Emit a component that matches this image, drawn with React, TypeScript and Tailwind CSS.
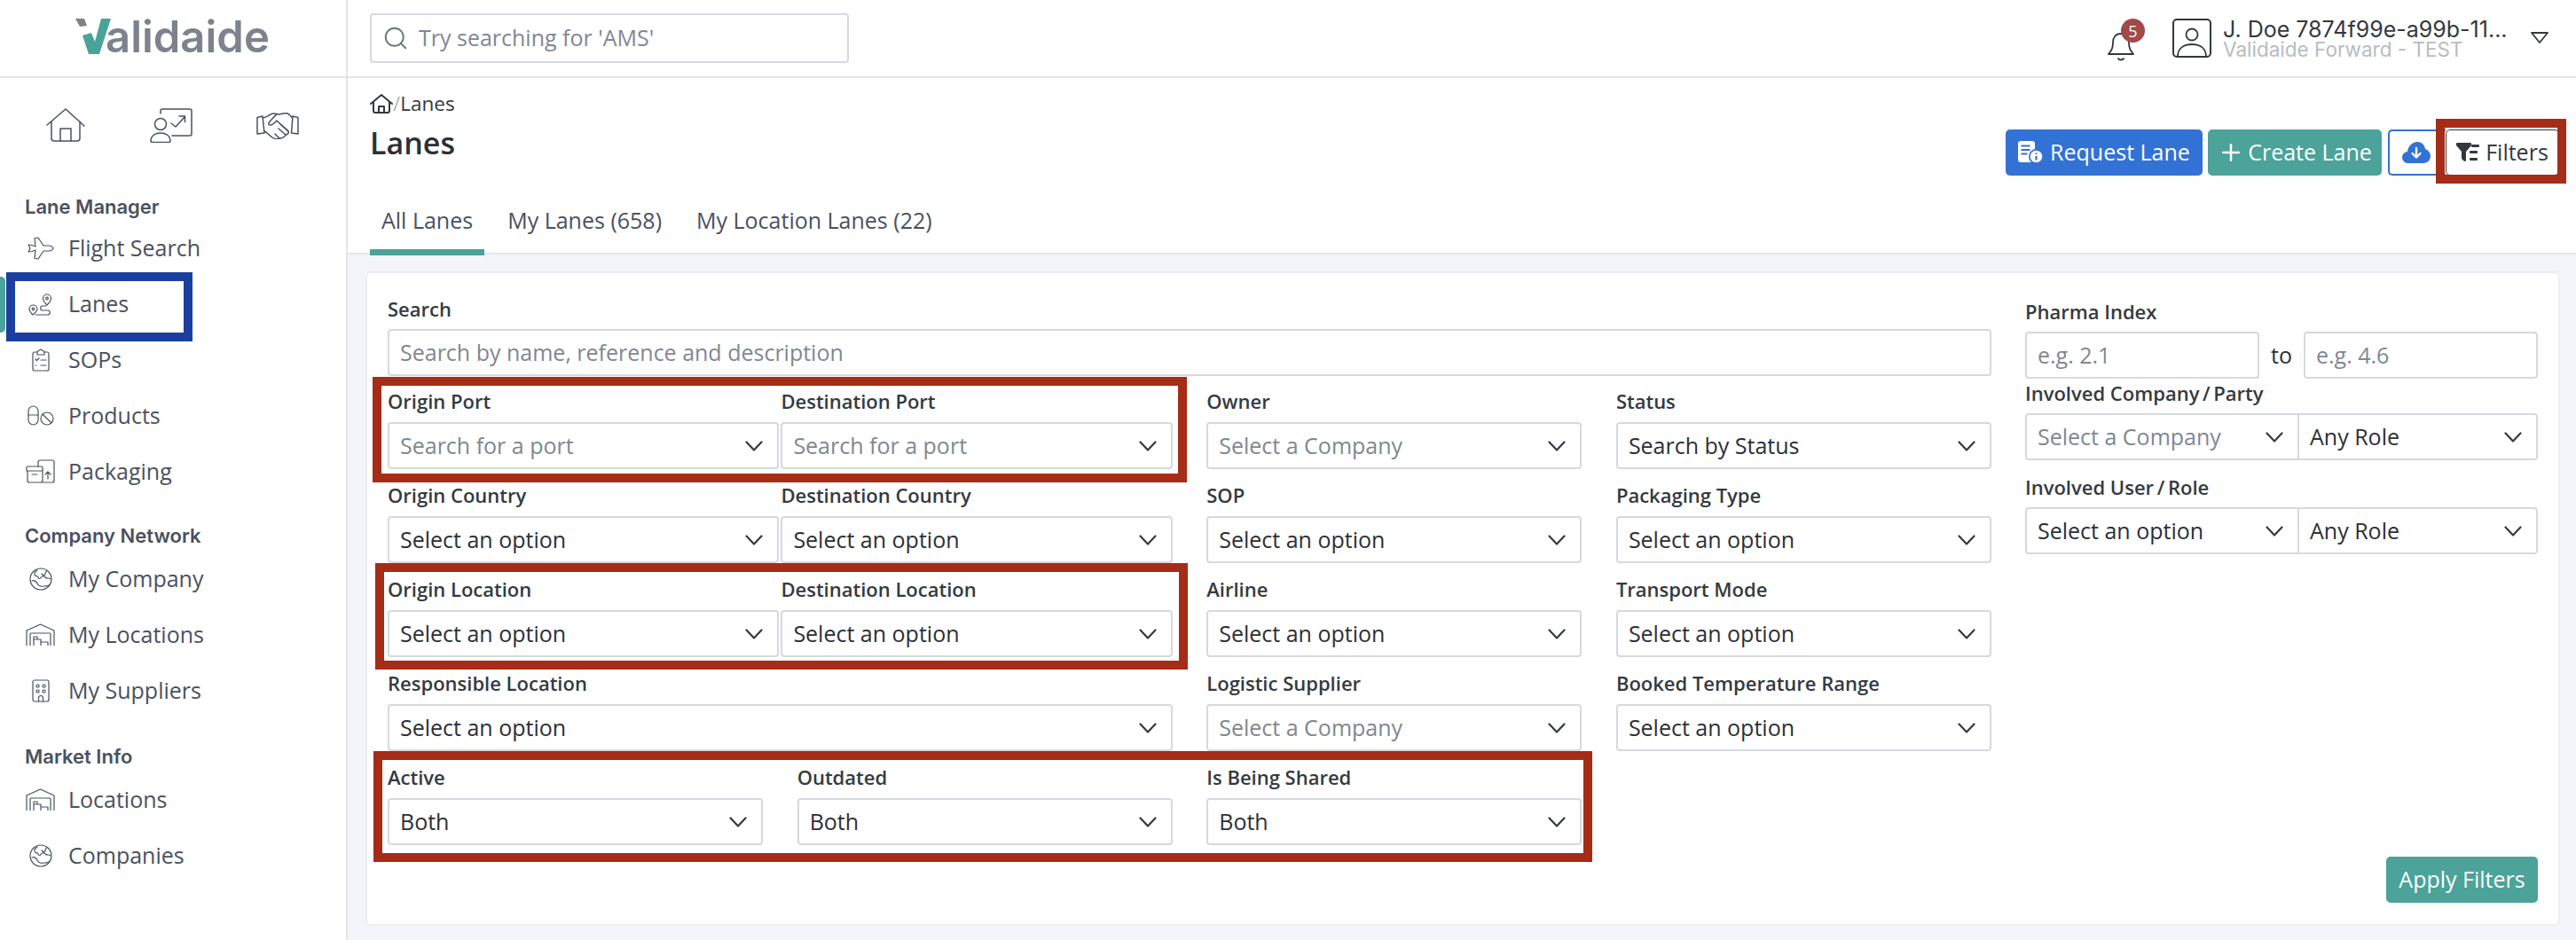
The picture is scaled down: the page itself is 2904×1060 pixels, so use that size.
import { ReactNode } from "react"
import { Search as SearchIcon, Plus } from "lucide-react"

const ink = "#4a5160"

function Ico({ w, h, vb, children, stroke = ink, sw = 1.5 }: { w: number; h: number; vb: string; children: ReactNode; stroke?: string; sw?: number }) {
  return (
    <svg width={w} height={h} viewBox={vb} fill="none" stroke={stroke} strokeWidth={sw} strokeLinecap="round" strokeLinejoin="round">
      {children}
    </svg>
  )
}

const HomeIcon = () => (
  <Ico w={44} h={38} vb="0 0 44 38">
    <path d="M1 19 22 1l21 19M6 15v19a3 3 0 0 0 3 3h26a3 3 0 0 0 3-3V15" />
    <path d="M16 37V23h12v14" />
  </Ico>
)
const PresenterIcon = () => (
  <Ico w={48} h={39} vb="0 0 48 39">
    <path d="M12 6V3a2 2 0 0 1 2-2h31a2 2 0 0 1 2 2v26a2 2 0 0 1-2 2H25" />
    <circle cx="12" cy="18" r="6.5" />
    <path d="M1 37c0-6 5-9 11-9s11 3 11 9c0 1-1 1.5-2 1.5H3C2 38.5 1 38 1 37Z" />
    <path d="m24 17 5 4 10-11M33 9h6.5v6.5" />
  </Ico>
)
const HandshakeIcon = () => (
  <Ico w={48} h={31} vb="0 0 48 31">
    <path d="M1 6.5 7 5l2 19-8 1ZM47 6.500 41 5l-1.500 19 7.500 1Z" />
    <path d="M7.500 7c5-1 8-5 12-5 3 0 4 1 6 1 4-1 8-2 10-1 2 1 4 4 5 5M9 22c3 1 6 5 9 7 3 2 6 2 8 1 3 0 6-2 7-4 2 0 4-2 3-4-1-1-10-9-13-12-1 1-5 6-8 5-3-1 0-4 2-6 2-2 4-5 6-6" />
    <path d="M33 26 25 19M36 22l-8-7M26 30l-5-5" />
  </Ico>
)
const PlaneIcon = () => (
  <Ico w={30} h={26} vb="0 0 30 26" sw={1.2}>
    <path d="M1 9l4 .5 4 1.5L8 1.5 12 1l6 9h6c3 0 5 2 5 3s-2 3-5 3h-6l-6 9-4-.5 1-9.5-4 1.5-4 .5 2-4Z" />
  </Ico>
)
const RouteIcon = () => (
  <Ico w={27} h={26} vb="0 0 27 26" sw={1.2}>
    <path d="M21 14c-3-3-4.500-5-4.500-7.500a4.500 4.500 0 0 1 9 0C25.500 9 24 11 21 14Z" />
    <circle cx="21" cy="6.5" r="1.3" />
    <path d="M5 25c-2.500-2.500-4-4.500-4-6.500a4.500 4.500 0 0 1 9 0C10 20.500 8 22.500 5 25Z" />
    <circle cx="5.5" cy="18.5" r="1.3" />
    <path d="M20 15h-4c-3 0-3 5 0 5h6c3 0 3 4.500 0 5H8" />
  </Ico>
)
const ClipboardIcon = () => (
  <Ico w={20} h={26} vb="0 0 20 26" sw={1.2}>
    <path d="M6 4H3a2 2 0 0 0-2 2v17a2 2 0 0 0 2 2h14a2 2 0 0 0 2-2V6a2 2 0 0 0-2-2h-3" />
    <path d="M6 7V3.5L10 1l4 2.5V7Z" />
    <path d="m4 12 1.5 1.500L8 11M10 13h6M4 19h1M10 19h6" />
  </Ico>
)
const PillIcon = () => (
  <Ico w={30} h={23} vb="0 0 30 23" sw={1.2}>
    <rect x="1" y="1" width="11" height="21" rx="5.5" />
    <path d="M1 11h11" />
    <circle cx="22" cy="15" r="7" />
    <path d="m17 10 10 10" />
  </Ico>
)
const BoxIcon = () => (
  <Ico w={33} h={27} vb="0 0 33 27" sw={1.2}>
    <path d="M14 8V3a2 2 0 0 1 2-2h14a2 2 0 0 1 2 2v21a2 2 0 0 1-2 2H19" />
    <path d="M1 9a1 1 0 0 1 1-1h16a1 1 0 0 1 1 1v4H1ZM2 13v11a2 2 0 0 0 2 2h13a2 2 0 0 0 2-2V13" />
    <path d="M7 17h6M25 22v-8M22 17l3-3 3 3" />
  </Ico>
)
const GlobeIcon = () => (
  <Ico w={26} h={26} vb="0 0 26 26" sw={1.2}>
    <circle cx="13" cy="13" r="12" />
    <path d="M9 3c-2 2-4 2-3 5s4 1 4 3 3 2 3 0c2 0 4-3 5-3-1-3 2-2 1-4M14 7l4 4c2 2 5 0 6 2" />
    <path d="M3 15c3-1 5 1 6 3s4 4 8 3c3 0 5 0 6-2" />
  </Ico>
)
const WarehouseIcon = () => (
  <Ico w={33} h={25} vb="0 0 33 25" sw={1.2}>
    <path d="M1 25V8L16.5 1 32 8v17" />
    <path d="M5 25V12a1 1 0 0 1 1-1h21a1 1 0 0 1 1 1v13" />
    <path d="M9 25V18h8v7M17 21h8v4M13 18v-3h-4v3" />
  </Ico>
)
const BuildingIcon = () => (
  <Ico w={20} h={26} vb="0 0 20 26" sw={1.2}>
    <rect x="1" y="1" width="18" height="24" rx="2" />
    <rect x="5" y="6" width="3" height="3" rx="1" />
    <rect x="12" y="6" width="3" height="3" rx="1" />
    <rect x="5" y="12" width="3" height="3" rx="1" />
    <rect x="12" y="12" width="3" height="3" rx="1" />
    <path d="M7.5 25v-4a2.500 2.500 0 0 1 5 0v4" />
  </Ico>
)

function NavItem({ icon, label }: { icon: ReactNode; label: string }) {
  return (
    <div className="flex h-[63px] items-center text-[25px] text-[#4a5160]">
      <div className="mr-[14px] flex w-[35px] items-center justify-center">{icon}</div>
      <span>{label}</span>
    </div>
  )
}

function NavHeading({ children, className }: { children: ReactNode; className?: string }) {
  return <div className={`font-['Inter',sans-serif] text-[22px] leading-[30px] font-semibold text-[#4a5160] ${className ?? ""}`}>{children}</div>
}

function Sidebar() {
  return (
    <aside className="w-[392px] shrink-0 border-r-2 border-[#e4e5e9] bg-white">
      <div className="flex h-[88px] items-start border-b-2 border-[#e4e5e9] pl-[85px] pt-[20px]">
        <svg width="40" height="42" viewBox="0 0 40 42" className="shrink-0">
          <path d="M0 1h10l3 8-8 1Z" fill="#7c838c" />
          <path d="M8 20l10-3 4 10L29 1h11L27 41H15Z" fill="#4aa39a" />
        </svg>
        <span className="-ml-[6px] -mt-[7px] font-['Inter',sans-serif] text-[49px] leading-[58px] font-semibold text-[#7c838c]">alidaide</span>
      </div>
      <div className="flex h-[106px] items-center">
        <div className="flex w-[148px] justify-center"><HomeIcon /></div>
        <div className="flex w-[90px] justify-center"><PresenterIcon /></div>
        <div className="flex w-[150px] justify-center"><HandshakeIcon /></div>
      </div>
      <nav className="pl-[28px]">
        <NavHeading className="mt-[24px]">Lane Manager</NavHeading>
        <NavItem icon={<PlaneIcon />} label="Flight Search" />
        <NavItem icon={<RouteIcon />} label="Lanes" />
        <NavItem icon={<ClipboardIcon />} label="SOPs" />
        <NavItem icon={<PillIcon />} label="Products" />
        <NavItem icon={<BoxIcon />} label="Packaging" />
        <NavHeading className="mt-[26px]">Company Network</NavHeading>
        <div className="mt-[2px]">
          <NavItem icon={<GlobeIcon />} label="My Company" />
          <NavItem icon={<WarehouseIcon />} label="My Locations" />
          <NavItem icon={<BuildingIcon />} label="My Suppliers" />
        </div>
        <NavHeading className="mt-[28px]">Market Info</NavHeading>
        <div className="mt-[2px]">
          <NavItem icon={<WarehouseIcon />} label="Locations" />
          <NavItem icon={<GlobeIcon />} label="Companies" />
        </div>
      </nav>
    </aside>
  )
}

function TopBar() {
  return (
    <header className="flex h-[88px] items-center border-b-2 border-[#e4e5e9] bg-white pl-[25px]">
      <div className="flex h-[56px] w-[540px] items-center rounded border-2 border-[#d6d9de] pl-[12px] text-[25px] text-[#7f8890]">
        <SearchIcon size={30} strokeWidth={1.5} className="text-[#6c757d]" />
        <span className="ml-[11px]">Try searching for 'AMS'</span>
      </div>
      <div className="relative ml-[1417px] h-[64px] w-[44px] shrink-0">
        <svg width="30" height="42" viewBox="0 0 30 42" className="absolute left-[2px] top-[22px]" fill="none" stroke="#33383f" strokeWidth="1.8" strokeLinecap="round" strokeLinejoin="round">
          <path d="M15 5C9 5 6 9 6 15c0 7-2 9-5 13h28c-3-4-5-6-5-13 0-6-3-10-9-10Z" />
          <path d="M12 33c1 2 5 2 6 0" />
        </svg>
        <span className="absolute left-[17px] top-[10px] flex h-[27px] w-[27px] items-center justify-center rounded-full bg-[#a14a49] text-[18px] leading-none text-white">5</span>
      </div>
      <div className="ml-[31px] flex h-[44px] w-[44px] shrink-0 items-end justify-center overflow-hidden rounded-[5px] border-2 border-[#33383f]">
        <svg width="36" height="36" viewBox="0 0 36 36" fill="none" stroke="#33383f" strokeWidth="1.8">
          <circle cx="18" cy="12" r="6.5" />
          <path d="M2 37c0-9 6-14 16-14s16 5 16 14" />
        </svg>
      </div>
      <div className="ml-[13px] flex w-[330px] shrink-0 flex-col pt-[2px]">
        <span className="whitespace-nowrap font-['Inter',sans-serif] text-[25px] leading-[24px] text-[#33383f]">J. Doe 7874f99e-a99b-11...</span>
        <span className="whitespace-nowrap font-['Inter',sans-serif] text-[22.5px] leading-[22px] text-[#b7bcc4]">Validaide Forward - TEST</span>
      </div>
      <svg width="20" height="14" viewBox="0 0 20 14" className="ml-[17px] shrink-0" fill="none" stroke="#33383f" strokeWidth="1.8" strokeLinejoin="round">
        <path d="M1 1h18L10 12Z" />
      </svg>
    </header>
  )
}

function Label({ children, className }: { children: ReactNode; className?: string }) {
  return <div className={`h-[30px] whitespace-nowrap text-[22px] leading-[28px] font-semibold text-[#343a40] ${className ?? "mb-[8px]"}`}>{children}</div>
}

function Chevron() {
  return (
    <svg width="20" height="12" viewBox="0 0 20 12" className="shrink-0" fill="none" stroke="#343a40" strokeWidth="2.2" strokeLinecap="round" strokeLinejoin="round">
      <path d="M1.5 1.500 10 10.500l8.500-9" />
    </svg>
  )
}

function Select({ value, muted, className }: { value: string; muted?: boolean; className?: string }) {
  return (
    <div className={`flex items-center justify-between bg-white pl-[12px] pr-[16px] text-[25px] ${muted ? "text-[#7f8890]" : "text-[#2b3036]"} ${className ?? "h-[53px] rounded border-2 border-[#d6d9de]"}`}>
      <span className="whitespace-nowrap">{value}</span>
      <Chevron />
    </div>
  )
}

function Field({ label, value, muted, className }: { label: string; value: string; muted?: boolean; className?: string }) {
  return (
    <div className={className}>
      <Label>{label}</Label>
      <Select value={value} muted={muted} />
    </div>
  )
}

function TextInput({ placeholder, className }: { placeholder: string; className?: string }) {
  return (
    <div className={`flex h-[53px] items-center rounded border-2 border-[#d6d9de] bg-white pl-[12px] text-[25px] text-[#7f8890] ${className ?? ""}`}>
      <span>{placeholder}</span>
    </div>
  )
}

function SplitSelect({ value, muted }: { value: string; muted?: boolean }) {
  return (
    <div className="flex rounded border-2 border-[#d6d9de]">
      <Select value={value} muted={muted} className="h-[49px] w-[307px] rounded-l border-r-2 border-[#d6d9de]" />
      <Select value="Any Role" className="h-[49px] flex-1 rounded-r" />
    </div>
  )
}

function FiltersCard() {
  return (
    <div className="flex h-full rounded-md border-2 border-[#eceef3] bg-white pb-[24px] pl-[23px]">
      <div className="w-[1808px] pt-[26px]">
        <Label className="mb-[7px]">Search</Label>
        <TextInput placeholder="Search by name, reference and description" className="mb-[14px]" />
        <div className="grid grid-cols-4 gap-x-[38.5px] gap-y-[15px]">
          <div className="col-span-2 grid grid-cols-2 gap-x-[2px]">
            <Field label="Origin Port" value="Search for a port" muted />
            <Field label="Destination Port" value="Search for a port" muted />
          </div>
          <Field label="Owner" value="Select a Company" muted />
          <Field label="Status" value="Search by Status" />
          <div className="col-span-2 grid grid-cols-2 gap-x-[2px]">
            <Field label="Origin Country" value="Select an option" />
            <Field label="Destination Country" value="Select an option" />
          </div>
          <Field label="SOP" value="Select an option" />
          <Field label="Packaging Type" value="Select an option" />
          <div className="col-span-2 grid grid-cols-2 gap-x-[2px]">
            <Field label="Origin Location" value="Select an option" />
            <Field label="Destination Location" value="Select an option" />
          </div>
          <Field label="Airline" value="Select an option" />
          <Field label="Transport Mode" value="Select an option" />
          <Field label="Responsible Location" value="Select an option" className="col-span-2" />
          <Field label="Logistic Supplier" value="Select a Company" muted />
          <Field label="Booked Temperature Range" value="Select an option" />
          <Field label="Active" value="Both" />
          <Field label="Outdated" value="Both" />
          <Field label="Is Being Shared" value="Both" />
        </div>
      </div>
      <div className="ml-[38px] flex w-[578px] flex-col justify-between pt-[29px]">
        <div>
          <Label className="mb-[7px]">Pharma Index</Label>
          <div className="mb-[2px] flex items-center">
            <TextInput placeholder="e.g. 2.1" className="w-[264px]" />
            <span className="w-[50px] text-center text-[25px] leading-none text-[#2b3036]">to</span>
            <TextInput placeholder="e.g. 4.6" className="w-[264px]" />
          </div>
          <div className="mb-[16px]">
            <Label className="mb-[7px]">Involved Company{"\u2009/\u2009"}Party</Label>
            <SplitSelect value="Select a Company" muted />
          </div>
          <Label className="mb-[7px]">Involved User{"\u2009/\u2009"}Role</Label>
          <SplitSelect value="Select an option" />
        </div>
        <div className="flex justify-end">
          <button className="flex h-[52px] w-[171px] items-center justify-center rounded-[5px] bg-[#4ba39a] text-[25px] text-white">Apply Filters</button>
        </div>
      </div>
    </div>
  )
}

function ActionButtons() {
  return (
    <div className="flex items-start pr-[19px] pt-[58px]">
      <button className="flex h-[52px] w-[222px] items-center justify-center gap-[7px] rounded-[5px] bg-[#3272d5] text-[25px] text-white">
        <svg width="29" height="26" viewBox="0 0 29 26">
          <rect x="0" y="0" width="19" height="24" rx="3" fill="#fff" />
          <path d="M3.5 5.5h10M3.5 10h10M3.5 14.5h7" stroke="#3272d5" strokeWidth="2" />
          <circle cx="20.5" cy="17.5" r="8.5" fill="#3272d5" />
          <circle cx="20.5" cy="17.5" r="6.8" fill="#fff" />
          <path d="M20.5 17v4.500M20.5 13.500v1.500" stroke="#3272d5" strokeWidth="2.2" />
        </svg>
        Request Lane
      </button>
      <button className="ml-[6px] flex h-[52px] w-[196px] items-center justify-center gap-[4px] rounded-[5px] bg-[#4ba39a] text-[25px] text-white">
        <Plus size={30} strokeWidth={2} />
        Create Lane
      </button>
      <button className="ml-[7px] flex h-[52px] w-[65px] items-center justify-center rounded-l-[5px] border-2 border-r-0 border-[#3272d5] bg-white">
        <svg width="32" height="26" viewBox="0 0 32 26" className="mr-[4px]">
          <path d="M7 25a6.500 6.500 0 0 1-1-13C7 5 12 1 17 1c5 0 8 3 9 8 3 1 6 4 6 8 0 5-4 8-8 8Z" fill="#3272d5" />
          <path d="M16 8v10M11.500 14l4.500 4.500 4.500-4.500" fill="none" stroke="#fff" strokeWidth="2.4" strokeLinecap="round" strokeLinejoin="round" />
        </svg>
      </button>
      <button className="flex h-[52px] w-[128px] items-center justify-center gap-[7px] rounded-[5px] border-[1.5px] border-[#33383f] bg-white text-[25px] text-[#33383f]">
        <svg width="26" height="22" viewBox="0 0 26 22" fill="#33383f">
          <path d="M0 1a1 1 0 0 1 1-1h15a1 1 0 0 1 1 1v2l-6 7v9c0 2-1 3-3 1l-2-2V10L0 3Z" />
          <rect x="17" y="2" width="9" height="3" rx="1" />
          <rect x="15" y="9" width="9" height="3" rx="1" />
          <rect x="15" y="17" width="9" height="3" rx="1" />
        </svg>
        Filters
      </button>
    </div>
  )
}

function Tabs() {
  const tabs = ["All Lanes", "My Lanes (658)", "My Location Lanes (22)"]
  return (
    <div className="flex h-[67px] gap-[13px] border-b-2 border-[#e3e5ec] bg-white pl-[25px]">
      {tabs.map((t, i) => (
        <div key={t} className={`-mb-[2px] flex h-[68px] items-start px-[13px] pt-[13px] text-[25px] leading-[30px] text-[#4a5160] ${i === 0 ? "border-b-[7px] border-[#4ba39a]" : ""}`}>
          {t}
        </div>
      ))}
    </div>
  )
}

function Main() {
  return (
    <main className="flex min-w-0 flex-1 flex-col bg-[#f4f5fa]">
      <TopBar />
      <div className="flex h-[132px] justify-between bg-white">
        <div className="pl-[25px] pt-[14px]">
          <div className="flex h-[30px] items-center text-[22.5px] text-[#33383f]">
            <svg width="26" height="22" viewBox="0 0 26 22" fill="none" stroke="#33383f" strokeWidth="2" strokeLinecap="round" strokeLinejoin="round">
              <path d="M1 11 13 1l12 10M4 9v10a2 2 0 0 0 2 2h14a2 2 0 0 0 2-2V9" />
              <path d="M10 21v-7h6v7" />
            </svg>
            <span className="text-[#adb5bd]">/</span>
            <span>Lanes</span>
          </div>
          <h1 className="mt-[9px] text-[34px] leading-[40px] font-semibold text-[#2b3036]">Lanes</h1>
        </div>
        <ActionButtons />
      </div>
      <Tabs />
      <div className="flex-1 pb-[16px] pl-[20px] pr-[18px] pt-[19px]">
        <FiltersCard />
      </div>
    </main>
  )
}

function Mark({ className, color = "border-[#a52c17]" }: { className: string; color?: string }) {
  return <div className={`pointer-events-none absolute border-[10px] ${color} ${className}`} />
}

export default function App() {
  return (
    <div className="relative flex h-[1060px] w-[2904px] overflow-hidden bg-white font-['Open_Sans',sans-serif]">
      <Sidebar />
      <Main />
      {/* active nav indicator */}
      <div className="absolute left-0 top-[312px] h-[63px] w-[6px] rounded-r-[5px] bg-[#4ba39a]" />
      {/* review annotations drawn over the screen */}
      <Mark className="left-[7px] top-[307px] h-[78px] w-[210px]" color="border-[#1a3fa0]" />
      <Mark className="left-[420px] top-[425px] h-[119px] w-[918px]" />
      <Mark className="left-[423px] top-[635px] h-[120px] w-[916px]" />
      <Mark className="left-[421px] top-[847px] h-[125px] w-[1374px]" />
      <Mark className="left-[2746px] top-[134px] h-[73px] w-[147px]" />
    </div>
  )
}
